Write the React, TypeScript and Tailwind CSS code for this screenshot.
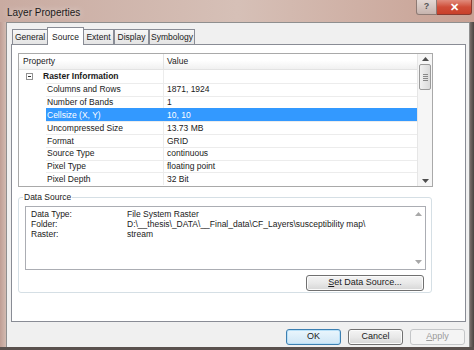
import React from "react";

const FONT = { fontFamily: '"Liberation Sans", Arial, sans-serif' };

const rows: [string, string, boolean?][] = [
  ["Columns and Rows", "1871, 1924"],
  ["Number of Bands", "1"],
  ["Cellsize (X, Y)", "10, 10", true],
  ["Uncompressed Size", "13.73 MB"],
  ["Format", "GRID"],
  ["Source Type", "continuous"],
  ["Pixel Type", "floating point"],
  ["Pixel Depth", "32 Bit"],
];

function UpArrow({ color = "#4d4d4d" }: { color?: string }) {
  return (
    <svg width="7" height="4" viewBox="0 0 7 4">
      <path d="M0 4 L3.5 0 L7 4 Z" fill={color} />
    </svg>
  );
}
function DownArrow({ color = "#4d4d4d" }: { color?: string }) {
  return (
    <svg width="7" height="4" viewBox="0 0 7 4">
      <path d="M0 0 L3.5 4 L7 0 Z" fill={color} />
    </svg>
  );
}

function Tab({
  label,
  selected,
  w,
}: {
  label: string;
  selected?: boolean;
  w: string;
}) {
  if (selected) {
    return (
      <div
        className={
          "relative z-10 -mb-px -mx-[1px] flex h-[18px] items-start justify-center border border-b-0 border-[#898c95] bg-white pt-[3px] text-[8.5px] text-[#1a1a1a] " +
          w
        }
      >
        {label}
      </div>
    );
  }
  return (
    <div
      className={
        "flex h-[15px] items-center justify-center border border-b-0 border-[#898c95] bg-gradient-to-b from-[#f7f7f7] to-[#e4e4e4] text-[8.5px] text-[#1a1a1a] " +
        w
      }
    >
      {label}
    </div>
  );
}

function Button({
  children,
  kind,
  className = "",
}: {
  children: React.ReactNode;
  kind?: "default" | "disabled";
  className?: string;
}) {
  const base =
    "flex items-center justify-center rounded-[3px] border text-[9px] ";
  if (kind === "default")
    return (
      <div
        className={
          base +
          "border-[#3c7fb1] bg-gradient-to-b from-[#eaf6fd] to-[#cfe6f6] text-[#1a1a1a] shadow-[inset_0_0_0_1px_#b8e0f8] " +
          className
        }
      >
        {children}
      </div>
    );
  if (kind === "disabled")
    return (
      <div
        className={
          base +
          "border-[#c4c6c8] bg-[#f4f4f4] text-[#9a9a9a] " +
          className
        }
      >
        {children}
      </div>
    );
  return (
    <div
      className={
        base +
        "border-[#707070] bg-gradient-to-b from-[#f4f4f4] via-[#e9e9e9] to-[#d6d6d6] text-[#1a1a1a] shadow-[inset_0_0_0_1px_#fbfbfb] " +
        className
      }
    >
      {children}
    </div>
  );
}

export default function App() {
  return (
    <div
      style={FONT}
      className="flex h-[350px] w-[474px] flex-col overflow-hidden bg-gradient-to-r from-[#c9aba1] via-[#d6c0b7] to-[#c8a194]"
    >
      {/* title bar */}
      <div className="relative flex h-[22px] shrink-0 items-start">
        <div className="pl-[7px] pt-[7px] text-[10px] leading-[12px] text-[#1a1a1a] [text-shadow:0_0_6px_rgba(255,255,255,0.7)]">
          Layer Properties
        </div>
        <div className="ml-auto mr-[2px] flex h-[15px]">
          <div className="flex w-[21px] items-center justify-center rounded-bl-[3px] border border-t-0 border-[#8d7a74] bg-gradient-to-b from-[#e3d8d4] to-[#c7b4ae] text-[9px] font-bold text-[#555]">
            ?
          </div>
          <div className="flex w-[35px] items-center justify-center rounded-br-[3px] border border-l-0 border-t-0 border-[#8a3a30] bg-gradient-to-b from-[#e08b7c] via-[#cf4d38] to-[#c8402a] text-[11px] font-bold text-white">
            ✕
          </div>
        </div>
      </div>

      <div className="flex min-h-0 flex-1">
        {/* left frame */}
        <div className="w-[6px] shrink-0 bg-gradient-to-r from-[#bf9e94] to-[#d2bab1]" />
        {/* client */}
        <div className="flex min-w-0 flex-1 flex-col border-l border-t border-[#8f8f8f] bg-[#f0f0f0] pl-[4px] pr-[3px] pt-[5px]">
          <div className="flex h-[16px] items-end pl-[1px]">
            <Tab label="General" w="w-[36px]" />
            <Tab label="Source" selected w="w-[37px]" />
            <Tab label="Extent" w="w-[31px]" />
            <Tab label="Display" w="w-[35px]" />
            <Tab label="Symbology" w="w-[46px]" />
          </div>
          {/* panel */}
          <div className="flex h-[278px] w-[455px] flex-col border border-[#898c95] bg-white pl-[6px] pt-[8px]">
            {/* property grid */}
            <div className="flex h-[134px] w-[415px] border border-[#a9a9a9] text-[8.5px] text-[#1a1a1a]">
              <div className="flex min-w-0 flex-1 flex-col">
                <div className="flex h-[16px] items-center border-b border-[#e3e3e3] bg-gradient-to-b from-white from-40% to-[#f1f1f1]">
                  <div className="w-[144px] pl-[4px]">Property</div>
                  <div className="h-full border-l border-[#e3e3e3]" />
                  <div className="pl-[3px]">Value</div>
                </div>
                <div className="flex h-[12.8px] items-center">
                  <div className="flex w-[24px] shrink-0 pl-[7px]">
                    <div className="flex h-[7px] w-[7px] items-center justify-center border border-[#939393]">
                      <div className="h-px w-[3px] bg-[#333]" />
                    </div>
                  </div>
                  <div className="w-[120px] font-bold">Raster Information</div>
                  <div className="h-full border-l border-[#ececec]" />
                </div>
                {rows.map(([k, v, sel]) => (
                  <div key={k} className="flex h-[12.8px]">
                    <div className="w-[27px] shrink-0" />
                    <div
                      className={
                        "flex flex-1 items-center border-t " +
                        (sel
                          ? "border-[#3399ff] bg-[#3399ff] text-white"
                          : "border-[#ececec]")
                      }
                    >
                      <div className="w-[117px] pl-[1px]">{k}</div>
                      <div
                        className={
                          "h-full border-l " +
                          (sel ? "border-[#3399ff]" : "border-[#ececec]")
                        }
                      />
                      <div className="pl-[3px]">{v}</div>
                    </div>
                  </div>
                ))}
              </div>
              {/* scrollbar */}
              <div className="flex w-[15px] shrink-0 flex-col items-center border-l border-[#e6e6e6] bg-[#f6f6f6]">
                <div className="flex h-[10px] items-center">
                  <UpArrow />
                </div>
                <div className="flex h-[26px] w-[12px] flex-col items-center justify-center gap-[1px] rounded-[2px] border border-[#9b9b9b] bg-gradient-to-r from-[#f1f1f1] to-[#dadada]">
                  <div className="h-px w-[5px] bg-[#888]" />
                  <div className="h-px w-[5px] bg-[#888]" />
                  <div className="h-px w-[5px] bg-[#888]" />
                  <div className="h-px w-[5px] bg-[#888]" />
                </div>
                <div className="mt-auto flex h-[10px] items-center">
                  <DownArrow />
                </div>
              </div>
            </div>

            {/* Data Source group */}
            <div className="relative mt-[10px] flex h-[96px] w-[414px] flex-col rounded-[3px] border border-[#d5dfe5] px-[6px] pt-[8px]">
              <div className="absolute left-[4px] top-[-6px] bg-white px-[1px] text-[8.5px] leading-[10px] text-[#1a1a1a]">
                Data Source
              </div>
              <div className="flex h-[64px] w-[401px] border border-[#abadb3] text-[8.5px] leading-[10px] text-[#1a1a1a]">
                <div className="flex flex-1 flex-col pl-[5px] pt-[2px]">
                  <div className="flex">
                    <div className="w-[96px]">Data Type:</div>
                    <div>File System Raster</div>
                  </div>
                  <div className="flex">
                    <div className="w-[96px]">Folder:</div>
                    <div>
                      D:\__thesis\_DATA\__Final_data\CF_Layers\susceptibility
                      map\
                    </div>
                  </div>
                  <div className="flex">
                    <div className="w-[96px]">Raster:</div>
                    <div>stream</div>
                  </div>
                </div>
                <div className="flex w-[14px] shrink-0 flex-col items-center py-[5px]">
                  <UpArrow color="#a8a8a8" />
                  <div className="mt-auto">
                    <DownArrow color="#a8a8a8" />
                  </div>
                </div>
              </div>
              <div className="mt-[5px] flex justify-end pr-[1px]">
                <Button className="h-[16px] w-[118px]">
                  <span>
                    <span className="underline">S</span>et Data Source...
                  </span>
                </Button>
              </div>
            </div>
          </div>

          {/* dialog buttons */}
          <div className="mt-[7px] flex justify-end gap-[7px] pr-[1px]">
            <Button kind="default" className="h-[16px] w-[55px]">
              OK
            </Button>
            <Button className="h-[16px] w-[55px]">Cancel</Button>
            <Button kind="disabled" className="h-[16px] w-[55px]">
              <span>
                <span className="underline">A</span>pply
              </span>
            </Button>
          </div>
        </div>
        {/* right frame */}
        <div className="w-[5px] shrink-0 border-l border-[#8f8f8f] bg-gradient-to-r from-[#7a6f6b] to-[#4a4340]" />
      </div>
      <div className="h-[3px] shrink-0 bg-[#5a514e]" />
    </div>
  );
}
